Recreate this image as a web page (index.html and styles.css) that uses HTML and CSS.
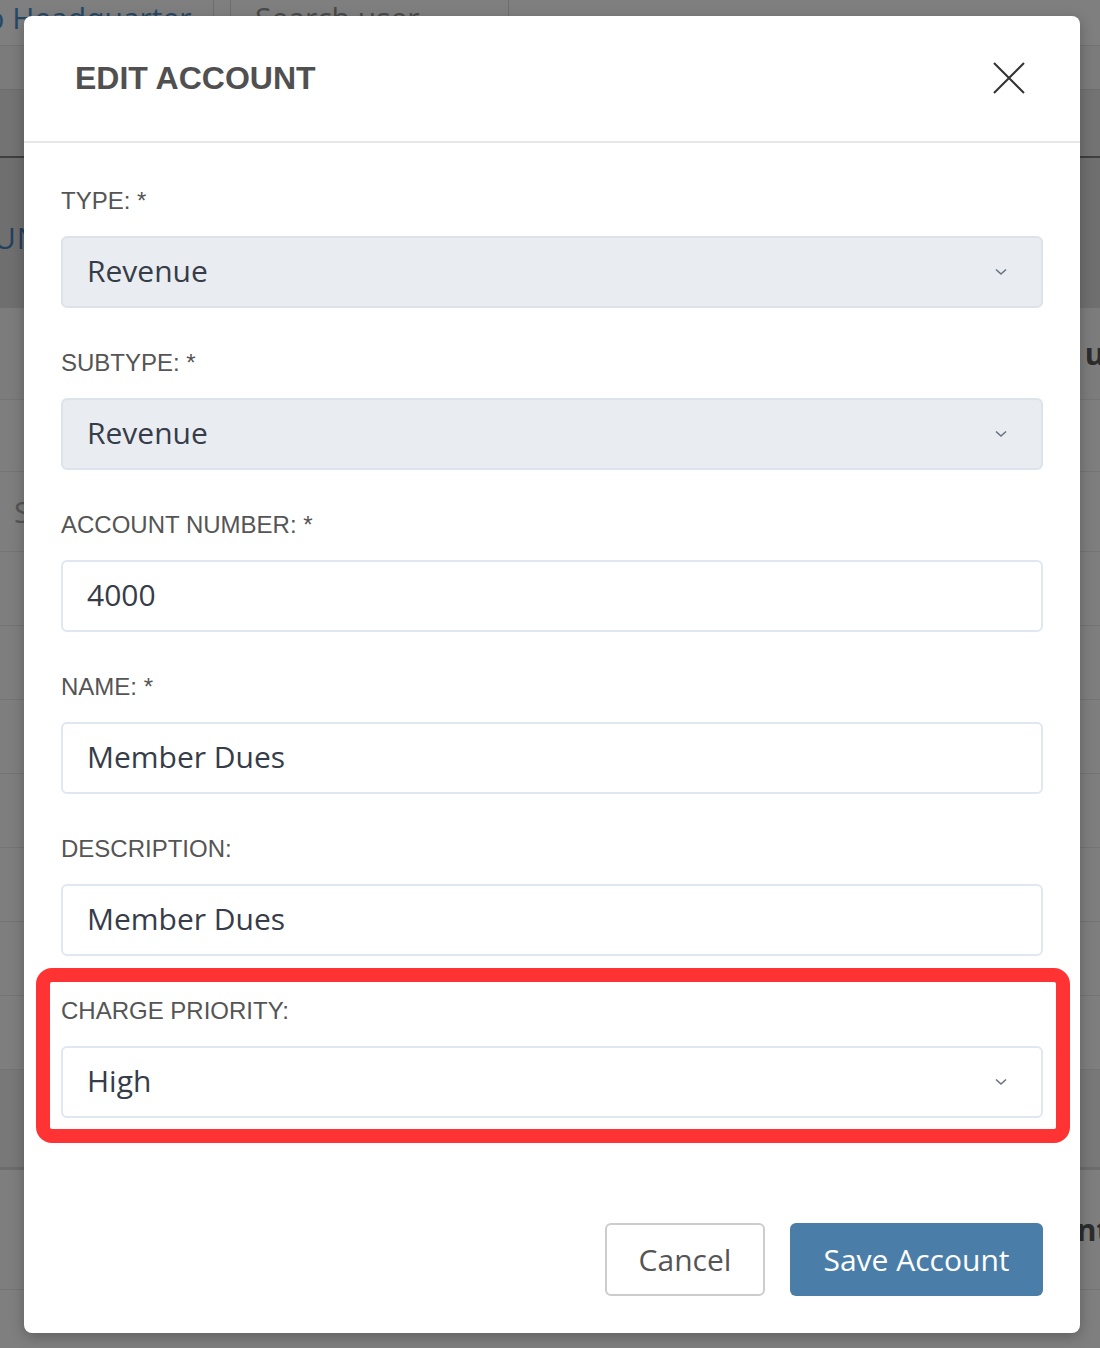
FILE: index.html
```html
<!DOCTYPE html>
<html lang="en">
<head>
<meta charset="utf-8">
<title>Edit Account</title>
<link rel="stylesheet" href="styles.css">
</head>
<body>
<div class="page">
  <div class="bar bar-top">
    <div class="cell cell-brand">p Headquarter</div>
    <div class="cell cell-gap"></div>
    <div class="cell cell-search">Search user</div>
  </div>
  <div class="bar bar-sub"></div>
  <div class="bar bar-nav"></div>
  <div class="hero"><span class="hero-text">UNITS</span></div>
  <div class="row row-title"><span class="row-right">ur</span></div>
  <div class="row row-a"></div>
  <div class="row row-b"><span class="row-left">S</span></div>
  <div class="row"></div>
  <div class="row"></div>
  <div class="row"></div>
  <div class="row"></div>
  <div class="row"></div>
  <div class="row"></div>
  <div class="row"></div>
  <div class="row row-dark"></div>
  <div class="row row-foot"><span class="row-right">nt:</span></div>
</div>

<div class="modal">
  <div class="modal-header">
    <h2 class="modal-title">EDIT ACCOUNT</h2>
    <button class="close-btn" aria-label="Close">
      <svg width="32" height="32" viewBox="0 0 32 32"><path d="M1 1 L31 31 M31 1 L1 31" stroke="#333" stroke-width="2" fill="none"/></svg>
    </button>
  </div>
  <div class="modal-body">
    <div class="group">
      <div class="label">TYPE: *</div>
      <div class="field field-select">
        <span class="value">Revenue</span>
        <svg class="chev" width="12" height="8" viewBox="0 0 12 8"><path d="M1 1.5 L6 6 L11 1.5" stroke="#6b7180" stroke-width="1.6" fill="none"/></svg>
      </div>
    </div>
    <div class="group">
      <div class="label">SUBTYPE: *</div>
      <div class="field field-select">
        <span class="value">Revenue</span>
        <svg class="chev" width="12" height="8" viewBox="0 0 12 8"><path d="M1 1.5 L6 6 L11 1.5" stroke="#6b7180" stroke-width="1.6" fill="none"/></svg>
      </div>
    </div>
    <div class="group">
      <div class="label">ACCOUNT NUMBER: *</div>
      <div class="field"><span class="value">4000</span></div>
    </div>
    <div class="group">
      <div class="label">NAME: *</div>
      <div class="field"><span class="value">Member Dues</span></div>
    </div>
    <div class="group">
      <div class="label">DESCRIPTION:</div>
      <div class="field"><span class="value">Member Dues</span></div>
    </div>
    <div class="group group-highlight">
      <div class="label">CHARGE PRIORITY:</div>
      <div class="field">
        <span class="value">High</span>
        <svg class="chev" width="12" height="8" viewBox="0 0 12 8"><path d="M1 1.5 L6 6 L11 1.5" stroke="#6b7180" stroke-width="1.6" fill="none"/></svg>
      </div>
    </div>
  </div>
  <div class="modal-footer">
    <button class="btn btn-cancel">Cancel</button>
    <button class="btn btn-save">Save Account</button>
  </div>
</div>
</body>
</html>
```

FILE: styles.css
```css
* { box-sizing: border-box; }

html, body {
  margin: 0;
  padding: 0;
}

body {
  width: 1100px;
  height: 1348px;
  overflow: hidden;
  position: relative;
  background: #7f7f7f;
  font-family: "Open Sans", "Noto Sans", sans-serif;
}

/* ---------- dimmed page behind the dialog ---------- */
.page {
  height: 1348px;
  background: #7f7f7f;
  overflow: hidden;
}

.bar { display: flex; }

.bar-top {
  height: 46px;
  background: #7f7f7f;
  border-bottom: 1px solid #737373;
}

.cell {
  height: 100%;
  border-right: 1px solid #6e6e6e;
  font-size: 30px;
  line-height: 36px;
  white-space: nowrap;
  overflow: hidden;
}

.cell-brand {
  width: 214px;
  color: #254867;
  text-indent: -14px;
}

.cell-gap { width: 17px; }

.cell-search {
  width: 278px;
  padding-left: 24px;
  color: #4a4a4a;
}

.bar-sub {
  height: 44px;
  background: #7b7b7b;
  border-bottom: 1px solid #6d6d6d;
}

.bar-nav {
  height: 68px;
  background: #737373;
  border-bottom: 2px solid #3f3f3f;
}

.hero {
  height: 150px;
  background: #6f6f6f;
  display: flex;
  align-items: center;
  padding-top: 8px;
}

.hero-text {
  font-size: 30px;
  color: #23405c;
  letter-spacing: 1px;
  margin-left: -6px;
}

.row {
  height: 74px;
  border-bottom: 1px solid #747474;
  background: #7e7e7e;
  display: flex;
  align-items: center;
  justify-content: space-between;
  font-size: 30px;
  color: #3c3c3c;
}

.row-title { height: 92px; background: #7c7c7c; }
.row-a { height: 72px; }
.row-b { height: 80px; }
.row-dark { height: 100px; background: #787878; border-bottom: 3px solid #6c6c6c; }
.row-foot { height: 120px; }

.row-left { margin-left: 14px; color: #555; }
.row-right { margin-left: auto; margin-right: -18px; font-weight: 700; color: #2c2c2c; }

/* ---------- dialog ---------- */
.modal {
  position: absolute;
  left: 24px;
  top: 16px;
  width: 1056px;
  height: 1317px;
  background: #ffffff;
  border-radius: 8px;
  box-shadow: 0 4px 14px rgba(0, 0, 0, 0.25);
  display: flex;
  flex-direction: column;
}

.modal-header {
  height: 127px;
  border-bottom: 2px solid #e7e7e7;
  display: flex;
  align-items: center;
  justify-content: space-between;
  padding: 0 55px 0 51px;
  flex-shrink: 0;
}

.modal-title {
  margin: 0;
  font-family: "Liberation Sans", Arial, sans-serif;
  font-weight: 700;
  font-size: 32px;
  color: #505050;
}

.close-btn {
  width: 32px;
  height: 32px;
  padding: 0;
  border: 0;
  background: none;
  display: flex;
  margin-top: -2px;
}

.modal-body {
  padding: 46px 37px 0 37px;
  display: flex;
  flex-direction: column;
  gap: 43px;
}

.group {
  display: flex;
  flex-direction: column;
}

.label {
  font-family: "Liberation Sans", Arial, sans-serif;
  font-size: 24px;
  line-height: 24px;
  color: #555555;
  margin-bottom: 23px;
}

.field {
  height: 72px;
  border: 2px solid #e1e7ef;
  border-radius: 6px;
  background: #ffffff;
  display: flex;
  align-items: center;
  justify-content: space-between;
  padding: 0 34px 0 24px;
}

.field-select {
  background: #e9ecf0;
  border-color: #dde3ea;
}

.value {
  font-family: "Open Sans", "Noto Sans", sans-serif;
  font-size: 30px;
  line-height: 40px;
  margin-top: -2px;
  color: #363c48;
}

.chev { flex-shrink: 0; }

.group-highlight { position: relative; }

.group-highlight::after {
  content: "";
  position: absolute;
  left: -25px;
  right: -27px;
  top: -31px;
  bottom: -25px;
  border: 14px solid #ff3333;
  border-radius: 16px;
  pointer-events: none;
}

.modal-footer {
  display: flex;
  justify-content: flex-end;
  gap: 25px;
  padding: 105px 37px 0 0;
}

.btn {
  height: 73px;
  border-radius: 6px;
  font-family: "Open Sans", "Noto Sans", sans-serif;
  font-size: 30px;
  padding: 0;
  cursor: pointer;
}

.btn-cancel {
  width: 160px;
  background: #ffffff;
  border: 2px solid #cccccc;
  color: #555555;
}

.btn-save {
  width: 253px;
  background: #4a7ea8;
  border: 0;
  color: #ffffff;
}
```
